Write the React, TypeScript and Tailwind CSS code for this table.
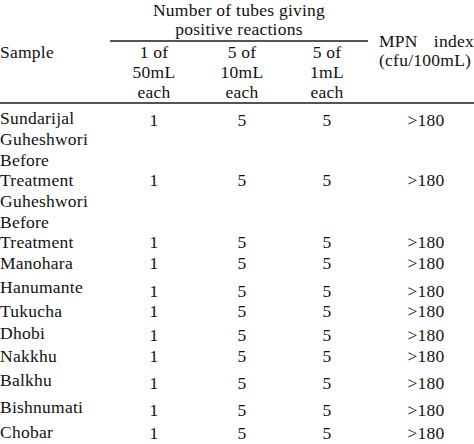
const rows = [
  { lines: ['Sundarijal'], h: 'h-[21px]', numPad: 'pt-[2px]' },
  { lines: ['Guheshwori', 'Before', 'Treatment'], h: 'h-[62px]', numPad: 'pt-[41px]' },
  { lines: ['Guheshwori', 'Before', 'Treatment'], h: 'h-[62px]', numPad: 'pt-[41px]' },
  { lines: ['Manohara'], h: 'h-[24px]', numPad: 'pt-0' },
  { lines: ['Hanumante'], h: 'h-[24px]', numPad: 'pt-[4px]' },
  { lines: ['Tukucha'], h: 'h-[22px]', numPad: 'pt-0' },
  { lines: ['Dhobi'], h: 'h-[23px]', numPad: 'pt-[2px]' },
  { lines: ['Nakkhu'], h: 'h-[24px]', numPad: 'pt-0' },
  { lines: ['Balkhu'], h: 'h-[27px]', numPad: 'pt-[3px]' },
  { lines: ['Bishnumati'], h: 'h-[25px]', numPad: 'pt-[3px]' },
  { lines: ['Chobar'], h: 'h-[24px]', numPad: 'pt-[1px]' },
];

export default function App() {
  return (
    <div className="w-[474px] h-[444px] overflow-hidden bg-white text-[#111] text-[17.5px] tracking-[0.25px] font-['Liberation_Serif',serif]">
      {/* Header */}
      <div className="flex h-[104px] border-b-2 border-[#555]">
        <div className="w-[110px] pt-[42px] leading-[20px]">Sample</div>
        <div className="w-[258px] flex flex-col">
          <div className="h-[42px] pt-[1px] border-b-2 border-[#555] text-center leading-[19px]">
            Number of tubes giving
            <br />
            positive reactions
          </div>
          <div className="flex leading-[20px] text-center">
            <div className="w-[88px]">1 of<br />50mL<br />each</div>
            <div className="w-[88px]">5 of<br />10mL<br />each</div>
            <div className="w-[82px]">5 of<br />1mL<br />each</div>
          </div>
        </div>
        <div className="w-[106px] pl-[11px] pt-[32px] leading-[19px]">
          <div className="flex justify-between">
            <span>MPN</span>
            <span>index</span>
          </div>
          <div>(cfu/100mL)</div>
        </div>
      </div>

      {/* Body */}
      <div className="pt-[4px]">
        {rows.map((r, i) => (
          <div key={i} className={`flex ${r.h}`}>
            <div className="w-[110px] leading-[20.5px] whitespace-nowrap">
              {r.lines.map((l, j) => (
                <div key={j}>{l}</div>
              ))}
            </div>
            <div className={`w-[88px] text-center leading-[20px] ${r.numPad}`}>1</div>
            <div className={`w-[88px] text-center leading-[20px] ${r.numPad}`}>5</div>
            <div className={`w-[82px] text-center leading-[20px] ${r.numPad}`}>5</div>
            <div className={`w-[106px] pl-[10px] text-center leading-[20px] ${r.numPad}`}>&gt;180</div>
          </div>
        ))}
      </div>
    </div>
  );
}
